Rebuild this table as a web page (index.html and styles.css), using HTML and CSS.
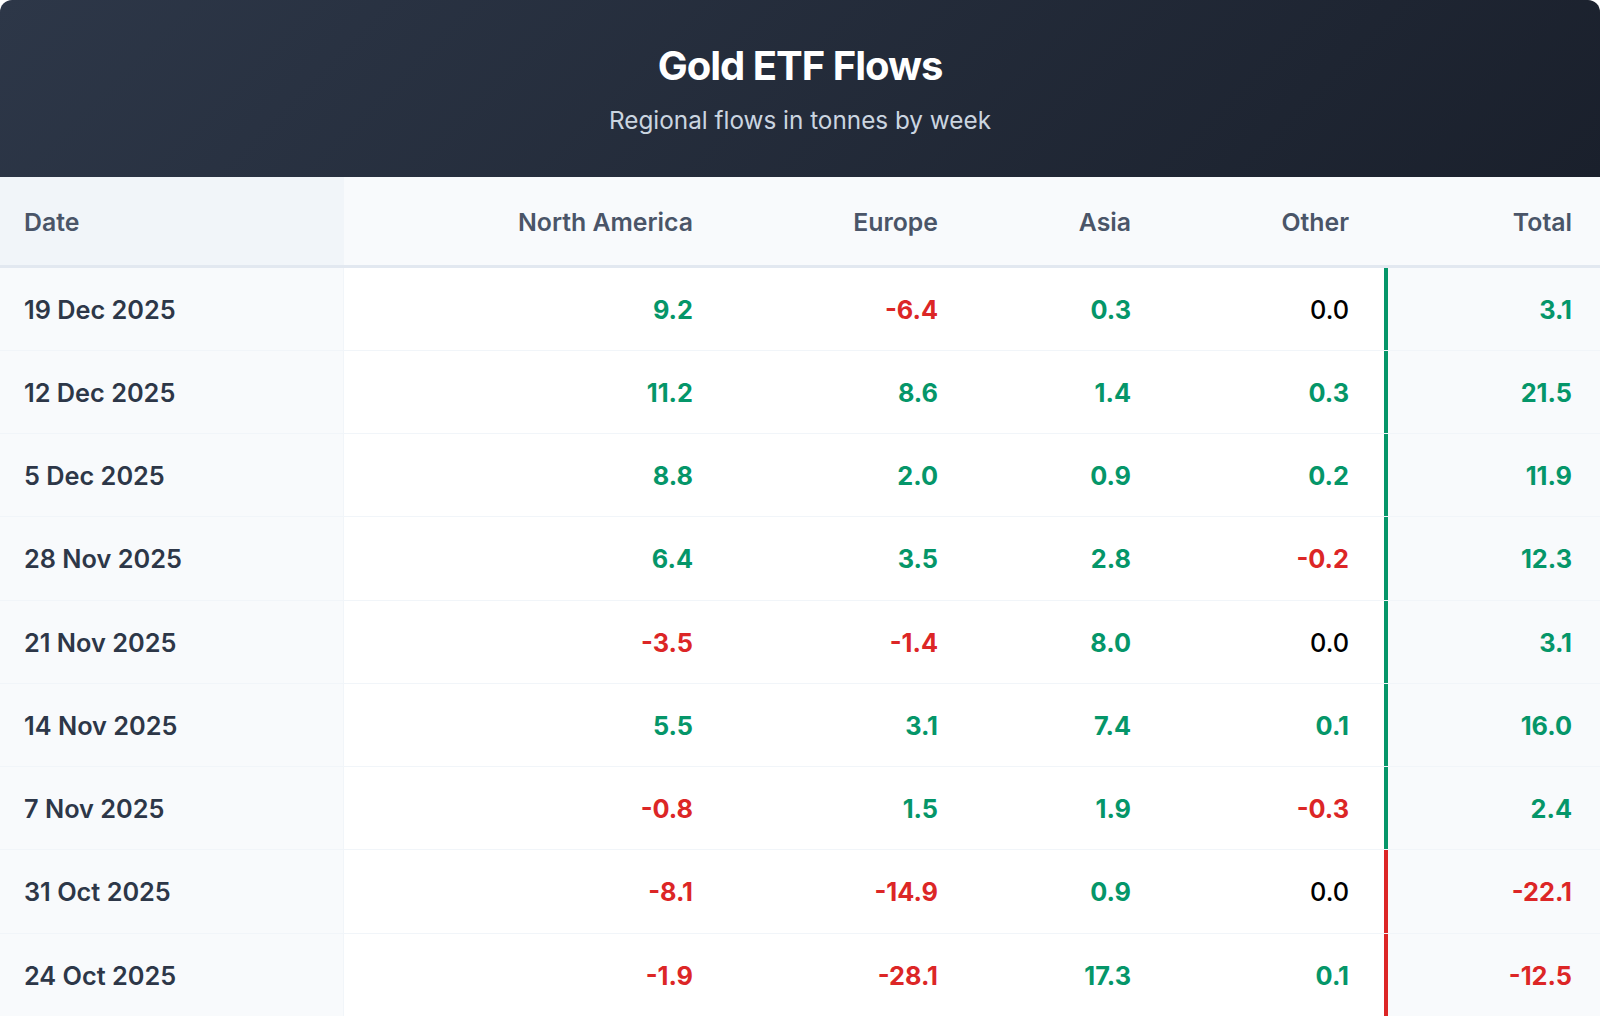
FILE: index.html
```html
<!DOCTYPE html>
<html lang="en">
<head>
<meta charset="utf-8">
<title>Gold ETF Flows</title>
<link rel="stylesheet" href="styles.css">
</head>
<body>
<div class="card">
  <header class="hero">
    <h1 class="title">Gold ETF Flows</h1>
    <p class="subtitle">Regional flows in tonnes by week</p>
  </header>
  <div class="table" role="table">
    <div class="row head" role="row">
      <div class="cell date">Date</div>
      <div class="cell num">North America</div>
      <div class="cell num">Europe</div>
      <div class="cell num">Asia</div>
      <div class="cell num other">Other</div>
      <div class="cell num total">Total</div>
    </div>
    <div class="row" role="row">
      <div class="cell date">19 Dec 2025</div>
      <div class="cell num pos">9.2</div>
      <div class="cell num neg">-6.4</div>
      <div class="cell num pos">0.3</div>
      <div class="cell num other zero">0.0</div>
      <div class="cell num total pos up">3.1</div>
    </div>
    <div class="row" role="row">
      <div class="cell date">12 Dec 2025</div>
      <div class="cell num pos">11.2</div>
      <div class="cell num pos">8.6</div>
      <div class="cell num pos">1.4</div>
      <div class="cell num other pos">0.3</div>
      <div class="cell num total pos up">21.5</div>
    </div>
    <div class="row" role="row">
      <div class="cell date">5 Dec 2025</div>
      <div class="cell num pos">8.8</div>
      <div class="cell num pos">2.0</div>
      <div class="cell num pos">0.9</div>
      <div class="cell num other pos">0.2</div>
      <div class="cell num total pos up">11.9</div>
    </div>
    <div class="row" role="row">
      <div class="cell date">28 Nov 2025</div>
      <div class="cell num pos">6.4</div>
      <div class="cell num pos">3.5</div>
      <div class="cell num pos">2.8</div>
      <div class="cell num other neg">-0.2</div>
      <div class="cell num total pos up">12.3</div>
    </div>
    <div class="row" role="row">
      <div class="cell date">21 Nov 2025</div>
      <div class="cell num neg">-3.5</div>
      <div class="cell num neg">-1.4</div>
      <div class="cell num pos">8.0</div>
      <div class="cell num other zero">0.0</div>
      <div class="cell num total pos up">3.1</div>
    </div>
    <div class="row" role="row">
      <div class="cell date">14 Nov 2025</div>
      <div class="cell num pos">5.5</div>
      <div class="cell num pos">3.1</div>
      <div class="cell num pos">7.4</div>
      <div class="cell num other pos">0.1</div>
      <div class="cell num total pos up">16.0</div>
    </div>
    <div class="row" role="row">
      <div class="cell date">7 Nov 2025</div>
      <div class="cell num neg">-0.8</div>
      <div class="cell num pos">1.5</div>
      <div class="cell num pos">1.9</div>
      <div class="cell num other neg">-0.3</div>
      <div class="cell num total pos up">2.4</div>
    </div>
    <div class="row" role="row">
      <div class="cell date">31 Oct 2025</div>
      <div class="cell num neg">-8.1</div>
      <div class="cell num neg">-14.9</div>
      <div class="cell num pos">0.9</div>
      <div class="cell num other zero">0.0</div>
      <div class="cell num total neg down">-22.1</div>
    </div>
    <div class="row" role="row">
      <div class="cell date">24 Oct 2025</div>
      <div class="cell num neg">-1.9</div>
      <div class="cell num neg">-28.1</div>
      <div class="cell num pos">17.3</div>
      <div class="cell num other pos">0.1</div>
      <div class="cell num total neg down">-12.5</div>
    </div>
  </div>
</div>
</body>
</html>
```
FILE: styles.css
```css
html, body {
  margin: 0;
  padding: 0;
  background: #ffffff;
}
body {
  font-family: "Inter", "Noto Sans", sans-serif;
  color: #111111;
}
.card {
  border-radius: 12px 12px 0 0;
  overflow: hidden;
  background: #ffffff;
}
.hero {
  background: linear-gradient(135deg, #2d3748 0%, #1a202c 100%);
  text-align: center;
  padding: 42px 0 38px;
  height: 177px;
  box-sizing: border-box;
}
.title {
  margin: 0 0 12px;
  font-size: 40px;
  line-height: 48px;
  font-weight: 700;
  letter-spacing: -1px;
  color: #ffffff;
}
.subtitle {
  margin: 0;
  font-size: 24.3px;
  line-height: 36px;
  font-weight: 400;
  color: #cbd5e0;
}
.row {
  display: grid;
  grid-template-columns: 344px 377px 245px 193px 225px 1fr;
  border-bottom: 1px solid #f1f5f9;
}
.cell {
  padding: 24px 28px 22px 24px;
  font-size: 25.3px;
  line-height: 36.25px;
  font-weight: 700;
  white-space: nowrap;
}
.num {
  text-align: right;
}
.other {
  padding-right: 35px;
}
.date {
  background: #f8fafc;
  border-right: 1px solid #f1f5f9;
  font-weight: 600;
  color: #2d3748;
}
.head {
  background: #f8fafc;
  border-bottom: 3px solid #e2e8f0;
}
.head .cell {
  padding-top: 27px;
  padding-bottom: 24.5px;
  font-size: 24.8px;
  line-height: 36px;
  font-weight: 600;
  color: #4a5568;
}
.head .date {
  background: #f1f5f9;
  border-right: none;
}
.total {
  background: #f8fafc;
}
.head .total {
  background: transparent;
}
.up {
  border-left: 4px solid #059669;
}
.down {
  border-left: 4px solid #dc2626;
}
.pos {
  color: #059669;
}
.neg {
  color: #dc2626;
}
.zero {
  color: #000000;
  font-weight: 500;
}
```
